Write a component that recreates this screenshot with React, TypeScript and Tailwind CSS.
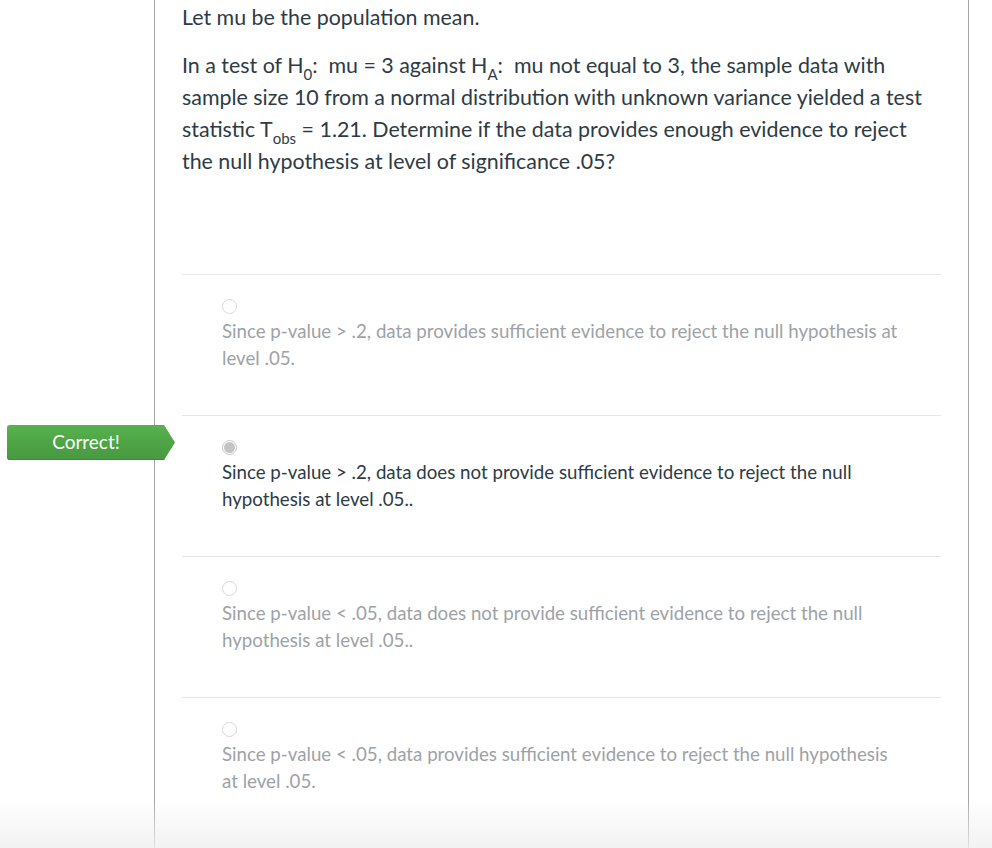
const answers = [
  {
    text: "Since p-value > .2, data provides sufficient evidence to reject the null hypothesis at level .05.",
    selected: false,
  },
  {
    text: "Since p-value > .2, data does not provide sufficient evidence to reject the null hypothesis at level .05..",
    selected: true,
  },
  {
    text: "Since p-value < .05, data does not provide sufficient evidence to reject the null hypothesis at level .05..",
    selected: false,
  },
  {
    text: "Since p-value < .05, data provides sufficient evidence to reject the null hypothesis at level .05.",
    selected: false,
  },
];

const Radio = ({ selected }: { selected: boolean }) => {
  return selected ? (
    <span className="flex h-[15px] w-[15px] items-center justify-center rounded-full border border-[#c8c8c8] bg-white">
      <span className="h-[11px] w-[11px] rounded-full bg-[#c4c4c4]" />
    </span>
  ) : (
    <span className="block h-[15px] w-[15px] rounded-full border border-[#d9d9d9] bg-white" />
  );
};

const AnswerRow = ({ text, selected }: { text: string; selected: boolean }) => {
  return (
    <div className="relative h-[141px] border-t border-[#e6e6e6] pl-10 pr-10 pt-[24px]">
      {selected && (
        <div className="absolute left-[-175px] top-[9px] flex h-[35px] w-[168px] items-center bg-gradient-to-b from-[#58b14d] to-[#47993f] pr-[12px] text-[19px] text-white rounded-l-[3px] shadow-[inset_0_-1px_0_#3c8a35] [clip-path:polygon(0_0,93.5%_0,100%_50%,93.5%_100%,0_100%)]">
          <span className="w-full pl-[2px] text-center">Correct!</span>
        </div>
      )}
      <div className="mb-[4px]">
        <Radio selected={selected} />
      </div>
      <p
        className={`text-[18.7px] leading-[27px] ${
          selected ? "text-[#2d3b45]" : "text-[#9da2a6]"
        }`}
      >
        {text}
      </p>
    </div>
  );
};

export default function App() {
  return (
    <div
      className="relative flex h-[848px] w-[992px] overflow-hidden bg-white"
      style={{ fontFamily: "Lato, 'Liberation Sans', sans-serif" }}
    >
      <div className="w-[154px] shrink-0" />
      <div className="w-[815px] shrink-0 border-x border-[#a5a5a5] pl-[27px] pr-[27px]">
        <div className="pt-[1px] text-[21.4px] leading-[32px] text-[#2d3b45]">
          <p>Let mu be the population mean.</p>
          <p className="mt-[16px]">
            In a test of H<sub className="text-[15px] leading-none align-[-3px]">0</sub>:&nbsp; mu = 3 against H
            <sub className="text-[15px] leading-none align-[-3px]">A</sub>:&nbsp; mu not equal to 3, the sample data with
            sample size 10 from a normal distribution with unknown variance yielded a test statistic T
            <sub className="text-[15px] leading-none align-[-3px]">obs</sub> = 1.21. Determine if the data provides enough
            evidence to reject the null hypothesis at level of significance .05?
          </p>
        </div>
        <div className="mt-[97px]">
          {answers.map((a, i) => (
            <AnswerRow key={i} text={a.text} selected={a.selected} />
          ))}
        </div>
      </div>
      <div className="pointer-events-none absolute bottom-0 left-0 h-[50px] w-full bg-gradient-to-b from-white/0 to-[#efefef]/80" />
    </div>
  );
}
